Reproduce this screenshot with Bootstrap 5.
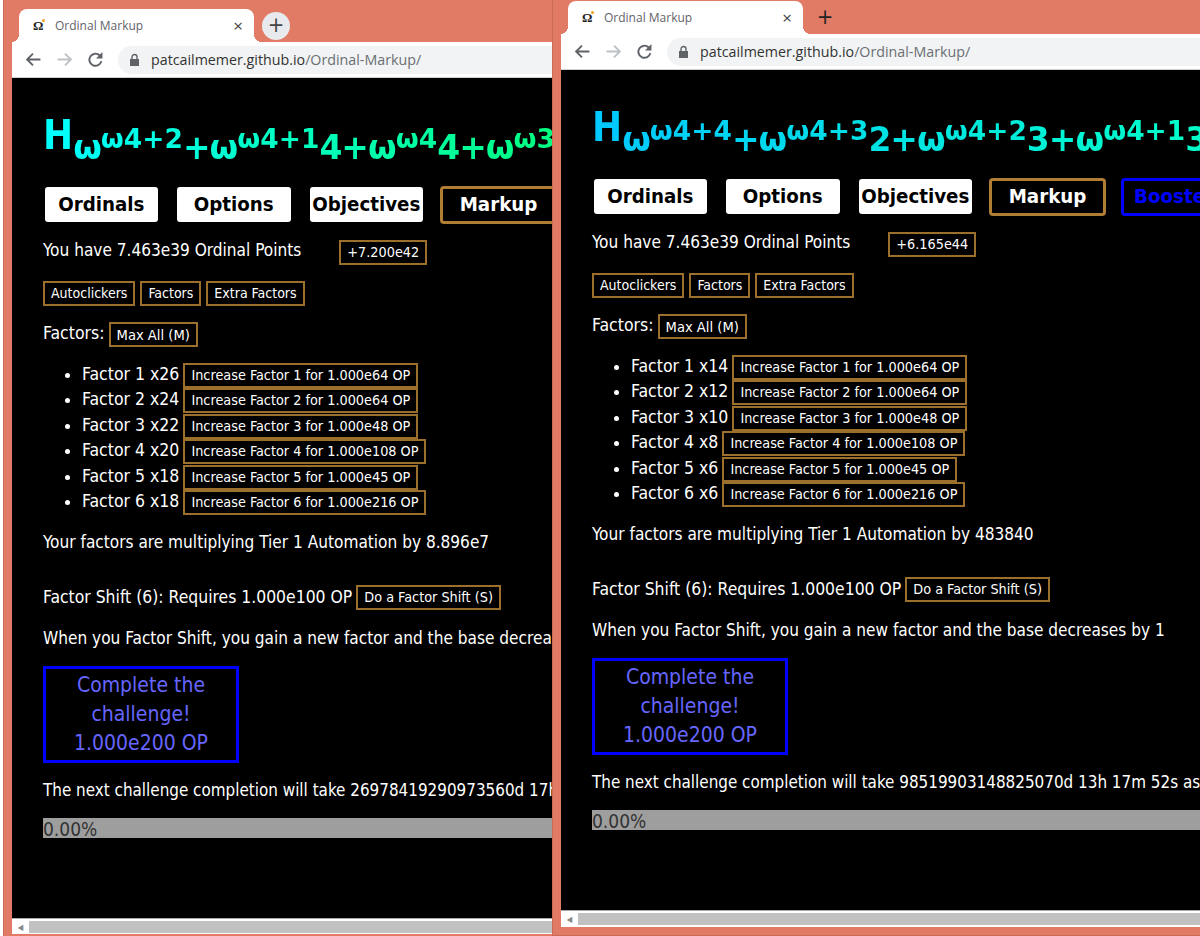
<!DOCTYPE html>
<html lang="en">
<head>
<meta charset="UTF-8">
<title>Ordinal Markup</title>
<link href="https://cdn.jsdelivr.net/npm/bootstrap@5.3.3/dist/css/bootstrap.min.css" rel="stylesheet">
<style>
html, body { height: 100%; overflow: hidden; }
body { background: #fff; position: relative; font-family: "DejaVu Sans Condensed", "DejaVu Sans", sans-serif; }

.app-window { position: absolute; background: #e27b66; padding: 0 0 0 8px; overflow: hidden; box-shadow: 0 0 0 1px #c96a58; }
.win-left { left: 4px; top: 0; width: 560px; height: 936px; }
.win-right { left: 553px; top: 0; width: 660px; height: 935px; }

/* browser chrome */
.tab-strip { height: 42px; padding: 9px 0 0 7px; align-items: flex-end; }
.win-right .tab-strip { height: 34px; padding: 1px 0 0 7px; }
.browser-tab { position: relative; width: 235px; height: 33px; background: #fff; border-radius: 8px 8px 0 0; padding: 0 11px 0 14px; font: 12px "Open Sans", sans-serif; color: #5f6368; }
.browser-tab::before, .browser-tab::after { content: ""; position: absolute; bottom: 0; width: 8px; height: 8px; }
.browser-tab::before { left: -8px; background: radial-gradient(circle at 0 0, transparent 8px, #fff 8px); }
.browser-tab::after { right: -8px; background: radial-gradient(circle at 100% 0, transparent 8px, #fff 8px); }
.fav { position: relative; font: bold 13px "Liberation Serif", serif; color: #222; width: 22px; }
.fav::after { content: ""; position: absolute; left: 9px; top: 1px; width: 3px; height: 3px; border-radius: 50%; background: #e8a020; }
.tab-close { margin-left: auto; font-size: 17px; line-height: 1; color: #444; }
.tab-new { width: 28px; height: 28px; margin: 0 0 2px 8px; border-radius: 50%; background: #e8eaed; color: #444; font-size: 22px; line-height: 26px; text-align: center; }
.win-right .tab-new { background: none; color: #222; }
.tool-bar { height: 36px; background: #fff; padding-left: 13px; gap: 14px; border-bottom: 1px solid #d0d0d0; }
.tool-ico { width: 17px; height: 17px; flex: none; }
.url-pill { flex: 1; height: 28px; background: #f1f3f4; border-radius: 14px 0 0 14px; padding-left: 11px; gap: 11px; font: 14.25px "Open Sans", sans-serif; color: #333; }
.url-pill em { font-style: normal; color: #6a6e73; }

/* game page */
.game-page { flex: 1; background: #000; color: #fff; padding: 0 0 0 31px; overflow: hidden; white-space: nowrap; font-size: 17.1px; }
.big-title { font-size: 40px; font-weight: 700; line-height: 46px; height: 74px; margin: 34px 0 0; overflow: hidden; width: 1000px; background-clip: text; -webkit-background-clip: text; color: transparent; }
.win-left .big-title { background-image: linear-gradient(90deg, #00ffff 0, #00ff80 510px); }
.win-right .big-title { background-image: linear-gradient(90deg, #00c8ff 0, #00ffc8 610px); }
.big-title sub, .big-title sup { position: static; line-height: 0; font-family: "DejaVu Sans", sans-serif; }
.big-title sub { font-size: 33px; letter-spacing: -1px; vertical-align: -10px; }
.big-title sup { font-size: 26.5px; letter-spacing: 0; vertical-align: 11px; }

.tab-row { gap: 19px; padding-left: 1.5px; align-items: center; height: 37px; margin-bottom: 17px; }
.btn.game-tab { flex: none; width: 113.5px; height: 35px; padding: 0; background: #fff; color: #000; border: 0; border-radius: 3px; font-size: 20.3px; font-weight: 600; line-height: 35px; }
.btn.game-tab-dark { flex: none; width: 117px; height: 38px; padding: 0; background: #000; color: #fff; border: 3px solid #b07d35; border-radius: 4px; font-size: 20.3px; font-weight: 600; line-height: 31px; margin-left: -2px; }
.btn.game-tab-blue { flex: none; width: 117px; height: 38px; padding: 0; background: #000; color: #0000ff; border: 3px solid #0000ff; border-radius: 4px; font-size: 20.3px; font-weight: 600; line-height: 31px; margin-left: -4px; }

.btn.op-btn { height: 25px; padding: 0 6px; background: #000; color: #fff; border: 2px solid #9c6f2c; border-radius: 0; font-size: 14.3px; line-height: 21px; white-space: nowrap; }
.btn.gain-btn { margin-left: 38px; }
.btn.max-btn { font-size: 14.6px; }
.op-row { height: 25px; align-items: flex-start; line-height: 21px; }
.btn-line { column-gap: 5px; }
.btn-line .btn.op-btn { font-size: 14px; }
.factor-head { font-size: 17.5px; line-height: 23px; }
.factor-list { list-style: disc; margin: 16px 0 0; padding-left: 39px; font-size: 17.5px; }
.factor-list li { height: 25.4px; line-height: 23px; }
.factor-list .btn { vertical-align: top; margin-left: -1px; }
.multi-line { margin-top: 15px; }
.shift-row { margin-top: 29px; font-size: 17.4px; line-height: 24px; }
.shift-note { margin-top: 16px; }
.chal-box { width: 196px; height: 97px; margin-top: 14px; padding-top: 2px; border: 3px solid #0000ff; color: #6666ff; font-size: 21px; line-height: 29px; text-align: center; white-space: normal; }
.next-line { margin-top: 15px; font-size: 16.9px; }
.chal-bar { height: 20px; background: #9e9e9e; color: #333; font-size: 19px; line-height: 22px; width: 1000px; margin-top: 15px; }

.fake-scroll { height: 16px; background: #fff; border-top: 1px solid #aaa; padding: 2px 0 1px; }
.fake-scroll span { width: 17px; color: #888; font-size: 8px; line-height: 13px; text-align: center; }
.fake-scroll i { display: block; flex: 1; background: #c1c1c1; }
.win-left .frame-gap { height: 2px; }
.win-right .frame-gap { height: 8px; }
.win-right .fake-scroll { height: 17px; padding: 2px 0 2px; }
</style>
</head>
<body>

<!-- left window -->
<div class="app-window win-left d-flex flex-column">
  <div class="tab-strip d-flex">
    <div class="browser-tab d-flex align-items-center"><span class="fav">Ω</span>Ordinal Markup<span class="tab-close">×</span></div>
    <div class="tab-new">+</div>
  </div>
  <div class="tool-bar d-flex align-items-center">
    <svg class="tool-ico" viewBox="0 0 16 16" fill="none" stroke="#5f6368" stroke-width="1.8"><path d="M14.5 8H2M7.5 2.5 2 8l5.500 5.500"/></svg>
    <svg class="tool-ico" viewBox="0 0 16 16" fill="none" stroke="#bdc1c6" stroke-width="1.8"><path d="M1.500 8H14M8.500 2.500 14 8l-5.500 5.500"/></svg>
    <svg class="tool-ico" viewBox="0 0 16 16" fill="none" stroke="#5f6368" stroke-width="1.8"><path d="M13.500 9.500A5.700 5.700 0 1 1 12 4.200"/><path d="M14.500 1v6h-6z" fill="#5f6368" stroke="none"/></svg>
    <div class="url-pill d-flex align-items-center">
      <svg width="11" height="14" viewBox="0 0 11 14"><path d="M1 6h9v7H1z" fill="#5f6368"/><path d="M3 6V4a2.500 2.500 0 0 1 5 0v2" fill="none" stroke="#5f6368" stroke-width="1.400"/></svg>
      <span>patcailmemer.github.io<em>/Ordinal-Markup/</em></span>
    </div>
  </div>
  <div class="game-page">
    <div class="big-title">H<sub>ω<sup>ω4+2</sup>+ω<sup>ω4+1</sup>4+ω<sup>ω4</sup>4+ω<sup>ω3</sup></sub></div>
    <div class="tab-row d-flex">
      <button class="btn game-tab">Ordinals</button>
      <button class="btn game-tab">Options</button>
      <button class="btn game-tab">Objectives</button>
      <button class="btn game-tab-dark">Markup</button>
    </div>
    <div class="op-row d-flex">You have 7.463e39 Ordinal Points<button class="btn op-btn gain-btn">+7.200e42</button></div>
    <div class="d-flex btn-line mt-3">
      <button class="btn op-btn">Autoclickers</button><button class="btn op-btn">Factors</button><button class="btn op-btn">Extra Factors</button>
    </div>
    <div class="op-row factor-head d-flex mt-3">Factors:<button class="btn op-btn max-btn ms-1">Max All (M)</button></div>
    <ul class="factor-list">
      <li>Factor 1 x26 <button class="btn op-btn">Increase Factor 1 for 1.000e64 OP</button></li>
      <li>Factor 2 x24 <button class="btn op-btn">Increase Factor 2 for 1.000e64 OP</button></li>
      <li>Factor 3 x22 <button class="btn op-btn">Increase Factor 3 for 1.000e48 OP</button></li>
      <li>Factor 4 x20 <button class="btn op-btn">Increase Factor 4 for 1.000e108 OP</button></li>
      <li>Factor 5 x18 <button class="btn op-btn">Increase Factor 5 for 1.000e45 OP</button></li>
      <li>Factor 6 x18 <button class="btn op-btn">Increase Factor 6 for 1.000e216 OP</button></li>
    </ul>
    <div class="multi-line">Your factors are multiplying Tier 1 Automation by 8.896e7</div>
    <div class="op-row shift-row d-flex">Factor Shift (6): Requires 1.000e100 OP<button class="btn op-btn ms-1">Do a Factor Shift (S)</button></div>
    <div class="shift-note">When you Factor Shift, you gain a new factor and the base decreases by 1</div>
    <div class="chal-box">Complete the challenge!<br>1.000e200 OP</div>
    <div class="next-line">The next challenge completion will take 26978419290973560d 17h 41m 12s as</div>
    <div class="chal-bar">0.00%</div>
  </div>
  <div class="fake-scroll d-flex"><span>◀</span><i></i></div>
  <div class="frame-gap"></div>
</div>

<!-- right window -->
<div class="app-window win-right d-flex flex-column">
  <div class="tab-strip d-flex">
    <div class="browser-tab d-flex align-items-center"><span class="fav">Ω</span>Ordinal Markup<span class="tab-close">×</span></div>
    <div class="tab-new">+</div>
  </div>
  <div class="tool-bar d-flex align-items-center">
    <svg class="tool-ico" viewBox="0 0 16 16" fill="none" stroke="#5f6368" stroke-width="1.8"><path d="M14.5 8H2M7.5 2.5 2 8l5.500 5.500"/></svg>
    <svg class="tool-ico" viewBox="0 0 16 16" fill="none" stroke="#bdc1c6" stroke-width="1.8"><path d="M1.500 8H14M8.500 2.500 14 8l-5.500 5.500"/></svg>
    <svg class="tool-ico" viewBox="0 0 16 16" fill="none" stroke="#5f6368" stroke-width="1.8"><path d="M13.500 9.500A5.700 5.700 0 1 1 12 4.200"/><path d="M14.500 1v6h-6z" fill="#5f6368" stroke="none"/></svg>
    <div class="url-pill d-flex align-items-center">
      <svg width="11" height="14" viewBox="0 0 11 14"><path d="M1 6h9v7H1z" fill="#5f6368"/><path d="M3 6V4a2.500 2.500 0 0 1 5 0v2" fill="none" stroke="#5f6368" stroke-width="1.400"/></svg>
      <span>patcailmemer.github.io<em>/Ordinal-Markup/</em></span>
    </div>
  </div>
  <div class="game-page">
    <div class="big-title">H<sub>ω<sup>ω4+4</sup>+ω<sup>ω4+3</sup>2+ω<sup>ω4+2</sup>3+ω<sup>ω4+1</sup>3</sub></div>
    <div class="tab-row d-flex">
      <button class="btn game-tab">Ordinals</button>
      <button class="btn game-tab">Options</button>
      <button class="btn game-tab">Objectives</button>
      <button class="btn game-tab-dark">Markup</button>
      <button class="btn game-tab-blue">Boosters</button>
    </div>
    <div class="op-row d-flex">You have 7.463e39 Ordinal Points<button class="btn op-btn gain-btn">+6.165e44</button></div>
    <div class="d-flex btn-line mt-3">
      <button class="btn op-btn">Autoclickers</button><button class="btn op-btn">Factors</button><button class="btn op-btn">Extra Factors</button>
    </div>
    <div class="op-row factor-head d-flex mt-3">Factors:<button class="btn op-btn max-btn ms-1">Max All (M)</button></div>
    <ul class="factor-list">
      <li>Factor 1 x14 <button class="btn op-btn">Increase Factor 1 for 1.000e64 OP</button></li>
      <li>Factor 2 x12 <button class="btn op-btn">Increase Factor 2 for 1.000e64 OP</button></li>
      <li>Factor 3 x10 <button class="btn op-btn">Increase Factor 3 for 1.000e48 OP</button></li>
      <li>Factor 4 x8 <button class="btn op-btn">Increase Factor 4 for 1.000e108 OP</button></li>
      <li>Factor 5 x6 <button class="btn op-btn">Increase Factor 5 for 1.000e45 OP</button></li>
      <li>Factor 6 x6 <button class="btn op-btn">Increase Factor 6 for 1.000e216 OP</button></li>
    </ul>
    <div class="multi-line">Your factors are multiplying Tier 1 Automation by 483840</div>
    <div class="op-row shift-row d-flex">Factor Shift (6): Requires 1.000e100 OP<button class="btn op-btn ms-1">Do a Factor Shift (S)</button></div>
    <div class="shift-note">When you Factor Shift, you gain a new factor and the base decreases by 1</div>
    <div class="chal-box">Complete the challenge!<br>1.000e200 OP</div>
    <div class="next-line">The next challenge completion will take 98519903148825070d 13h 17m 52s as</div>
    <div class="chal-bar">0.00%</div>
  </div>
  <div class="fake-scroll d-flex"><span>◀</span><i></i></div>
  <div class="frame-gap"></div>
</div>

<script src="https://cdn.jsdelivr.net/npm/bootstrap@5.3.3/dist/js/bootstrap.bundle.min.js"></script>
</body>
</html>
